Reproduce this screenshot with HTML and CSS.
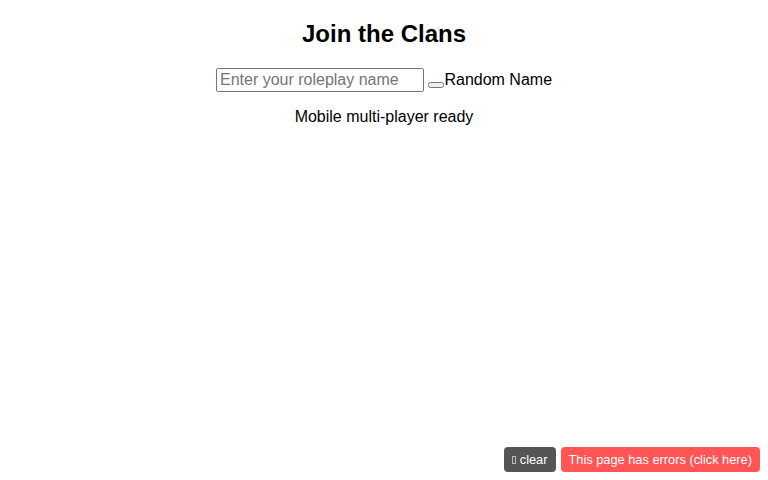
FILE: index.html
```html
<!DOCTYPE html>
<html lang="en">
<head>
  <meta charset="UTF-8">
  <title>Join the Clans</title>
  <link rel="stylesheet" href="styles.css">
</head>
<body>

  <div class="join">
    <h1>Join the Clans</h1>

    <div class="name-row">
      <input type="text" class="name-input" placeholder="Enter your roleplay name">
      <button type="button" class="random-btn"></button><span>Random Name</span>
    </div>

    <p class="note">Mobile multi-player ready</p>
  </div>

  <div class="error-bar">
    <button type="button" class="bar-btn clear-btn"><span class="icon"></span> clear</button>
    <button type="button" class="bar-btn error-btn">This page has errors (click here)</button>
  </div>

</body>
</html>
```

FILE: styles.css
```css
body {
  font-family: "Liberation Sans", Arial, sans-serif;
  font-size: 16px;
  background: #fff;
  color: #000;
  margin: 0;
  padding: 20px 8px 0;
}

.join {
  text-align: center;
}

h1 {
  font-size: 24px;
  font-weight: bold;
  margin: 0 0 20px;
}

.name-row {
  height: 25px;
}

.name-input {
  width: 208px;
  height: 24px;
  box-sizing: border-box;
  font-family: "Liberation Sans", Arial, sans-serif;
  font-size: 16px;
}

.random-btn {
  padding: 1px 6px;
}

.note {
  margin: 15px 0 0;
}

.error-bar {
  position: fixed;
  right: 8px;
  bottom: 8px;
  display: flex;
  gap: 5px;
}

.bar-btn {
  height: 25px;
  padding: 0 8px;
  border: none;
  border-radius: 4px;
  color: #fff;
  font-family: "Liberation Sans", Arial, sans-serif;
  font-size: 12.8px;
}

.clear-btn {
  background: #555;
}

.icon {
  display: inline-block;
  box-sizing: border-box;
  width: 4.4px;
  height: 8px;
  border: 1px solid rgba(255, 255, 255, 0.6);
}

.error-btn {
  background: #f55;
}
```
